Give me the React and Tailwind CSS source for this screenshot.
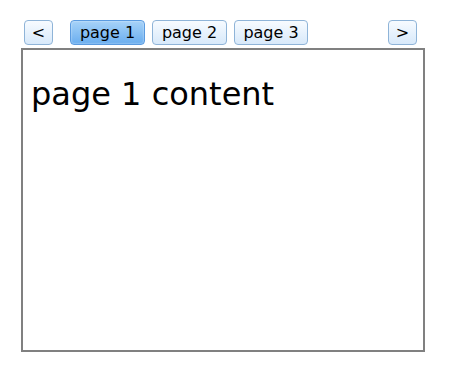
import React from "react";

const font = { fontFamily: '"DejaVu Sans", "Liberation Sans", sans-serif' };

function Btn({ children, active, className = "" }) {
  return (
    <button
      className={
        "h-[25px] rounded-[4px] border text-[16px] leading-none text-black flex items-center justify-center " +
        (active
          ? "border-[#5b9be0] bg-gradient-to-b from-[#a6d2f8] to-[#6aaeef] shadow-[inset_0_0_2px_rgba(255,255,255,0.7)] "
          : "border-[#8fb4d8] bg-gradient-to-b from-[#f7fbff] to-[#d8e9fa] ") +
        className
      }
      style={font}
    >
      {children}
    </button>
  );
}

export default function App() {
  return (
    <div className="w-[454px] h-[380px] bg-white pl-[21px] pt-[20px]" style={font}>
      <div className="flex w-[404px] h-[25px] items-center">
        <Btn className="ml-[3px] w-[29px]">&lt;</Btn>
        <Btn active className="ml-[17px] w-[75px]">page 1</Btn>
        <Btn className="ml-[7px] w-[75px]">page 2</Btn>
        <Btn className="ml-[7px] w-[74px]">page 3</Btn>
        <Btn className="ml-auto mr-[8px] w-[29px]">&gt;</Btn>
      </div>
      <div className="mt-[3px] w-[404px] h-[304px] border-2 border-[#808080] px-[8px] pt-[24px]">
        <div className="text-[32px] leading-[40px] text-black" style={font}>
          page 1 content
        </div>
      </div>
    </div>
  );
}
